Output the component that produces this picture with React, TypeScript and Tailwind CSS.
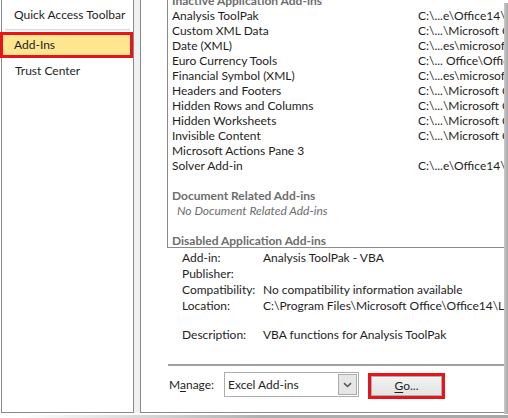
import React from "react";

const inactive: [string, string][] = [
  ["Analysis ToolPak", "C:\\...e\\Office14\\Library\\Analysis"],
  ["Custom XML Data", "C:\\...\\Microsoft Office\\Office14"],
  ["Date (XML)", "C:\\...es\\microsoft shared\\Smart Tag"],
  ["Euro Currency Tools", "C:\\... Office\\Office14\\Library"],
  ["Financial Symbol (XML)", "C:\\...es\\microsoft shared\\Smart Tag"],
  ["Headers and Footers", "C:\\...\\Microsoft Office\\Office14"],
  ["Hidden Rows and Columns", "C:\\...\\Microsoft Office\\Office14"],
  ["Hidden Worksheets", "C:\\...\\Microsoft Office\\Office14"],
  ["Invisible Content", "C:\\...\\Microsoft Office\\Office14"],
  ["Microsoft Actions Pane 3", ""],
  ["Solver Add-in", "C:\\...e\\Office14\\Library\\SOLVER"],
];

const details: [string, string][] = [
  ["Add-in:", "Analysis ToolPak - VBA"],
  ["Publisher:", ""],
  ["Compatibility:", "No compatibility information available"],
  ["Location:", "C:\\Program Files\\Microsoft Office\\Office14\\Library\\Analysis\\ATPVBAEN.XLAM"],
];

export default function App() {
  return (
    <div className="w-[508px] h-[418px] bg-white overflow-hidden font-['Lato',sans-serif] text-[12px] text-[#1e1e1e] flex flex-col">
      <div className="flex h-[414px]">
        <div className="flex w-[504px] h-[413px]">
          {/* left nav */}
          <aside className="ml-[1px] w-[133px] shrink-0 border-l border-r border-b border-[#8a8a8a] flex flex-col">
            <div className="h-[29px] leading-[29px] pl-[12px] whitespace-nowrap">Quick Access Toolbar</div>
            <div className="mx-[3px] h-[2px] border-t border-[#d9d9d9] bg-[#f1f1f1]" />
            <div className="mt-[1px] -ml-[2px] w-[133px] h-[26px] border-[3px] border-[#e8141c] bg-[#fde68f] pl-[11px] leading-[20px]">
              Add-Ins
            </div>
            <div className="h-[26px] leading-[26px] pl-[13px]">Trust Center</div>
          </aside>

          <div className="w-[6px] shrink-0 bg-[#f0f0f0]" />

          {/* main panel */}
          <section className="flex-1 border-l border-b border-[#8a8a8a] overflow-hidden flex flex-col">
            <div className="ml-[26px] -mr-[30px] -mt-[8px] h-[256px] shrink-0 border border-[#8a8a8a] overflow-hidden">
              <div className="pl-[4px]">
                <div className="h-[15px] leading-[15px] font-bold text-[#6d6d6d]">Inactive Application Add-ins</div>
                {inactive.map(([name, loc]) => (
                  <div key={name} className="grid grid-cols-[246px_1fr] h-[15px] leading-[15px] whitespace-nowrap">
                    <span>{name}</span>
                    <span className="overflow-hidden">{loc}</span>
                  </div>
                ))}
                <div className="h-[15px]" />
                <div className="h-[15px] leading-[15px] font-bold text-[#6d6d6d]">Document Related Add-ins</div>
                <div className="h-[15px] leading-[15px] italic text-[#6d6d6d] pl-[5px]">No Document Related Add-ins</div>
                <div className="h-[15px]" />
                <div className="h-[15px] leading-[15px] font-bold text-[#6d6d6d]">Disabled Application Add-ins</div>
              </div>
            </div>

            <div className="mt-[2px] pl-[41px] whitespace-nowrap">
              {details.map(([k, v]) => (
                <div key={k} className="grid grid-cols-[81px_1fr] h-[16px] leading-[16px]">
                  <span>{k}</span>
                  <span>{v}</span>
                </div>
              ))}
              <div className="grid grid-cols-[81px_1fr] h-[16px] leading-[16px] mt-[13px]">
                <span>Description:</span>
                <span>VBA functions for Analysis ToolPak</span>
              </div>
            </div>

            <div className="mt-[21px] ml-[27px] h-[2px] bg-[#a0a0a0]" />

            <div className="mt-[6px] ml-[28px] flex items-start">
              <div className="w-[55px] h-[25px] leading-[25px]">
                M<span className="underline underline-offset-2">a</span>nage:
              </div>
              <div className="w-[135px] h-[25px] border border-[#abadb3] flex">
                <div className="flex-1 pl-[3px] leading-[23px]">Excel Add-ins</div>
                <div className="w-[19px] m-[1px] border border-[#acacac] bg-[#e6e6e6] flex items-center justify-center">
                  <svg width="9" height="6" viewBox="0 0 9 6">
                    <path d="M1 1.2 L4.5 4.5 L8 1.2" fill="none" stroke="#5a5a5a" strokeWidth="1.6" />
                  </svg>
                </div>
              </div>
              <div className="ml-[9px] mt-[1px] w-[77px] h-[26px] border-[3px] border-[#e8141c]">
                <div className="h-full border border-[#adadad] bg-gradient-to-b from-[#f2f2f2] to-[#e3e3e3] flex items-center justify-center leading-none">
                  <span>
                    <span className="underline underline-offset-2">G</span>o...
                  </span>
                </div>
              </div>
            </div>
          </section>
        </div>
        <div className="mt-[3px] w-[4px] bg-gradient-to-r from-[#c8c8c8] to-[#a8a8a8]" />
      </div>
      <div className="mt-[1px] ml-[19px] h-[3px] bg-gradient-to-r from-[#ffffff] via-[#b0b0b0] to-[#a8a8a8] [background-size:100%_100%]" />
    </div>
  );
}
